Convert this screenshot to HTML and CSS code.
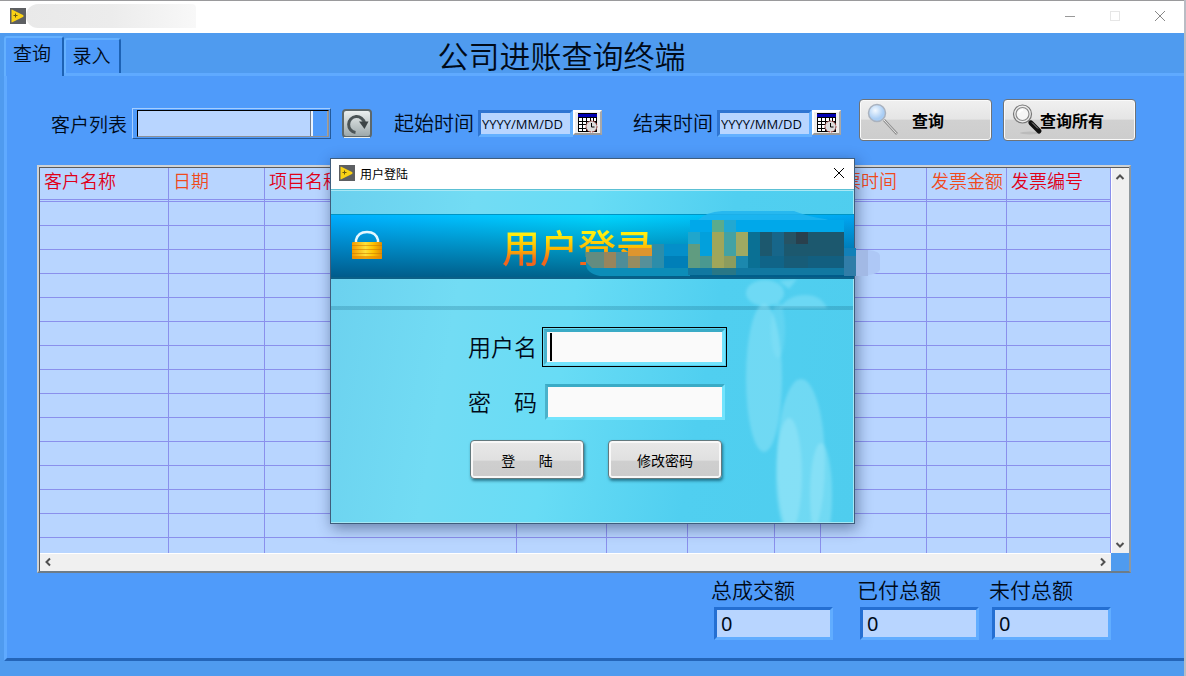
FILE: index.html
```html
<!DOCTYPE html>
<html lang="zh-CN">
<head>
<meta charset="utf-8">
<title>公司进账查询终端</title>
<link rel="stylesheet" href="styles.css">
</head>
<body>
<svg width="0" height="0" class="defs" aria-hidden="true">
  <defs>
    <symbol id="app" viewBox="0 0 16 16"><rect width="16" height="16" fill="#5d5f62"/><path d="M1.500 2Q1.500 1.400 2.300 1.700L13 7Q14.400 8 13 9L2.300 14.300Q1.500 14.600 1.500 14z" fill="#fad214"/><path d="M3.500 7.500h4M5.500 5.500v4" stroke="#6a5a10" stroke-width="1"/></symbol>
    <symbol id="cal" viewBox="0 0 20 20"><rect x="0" y="0" width="19" height="19" fill="#000"/><rect x="0" y="1" width="19" height="3" fill="#0000b4"/><g fill="#fff"><path d="M1 5h3v3H1zM5 5h3v3H5zM9 5h3v3H9zM13 5h2v3h-2zM16 5h2v3h-2zM1 9h3v2H1zM5 9h3v2H5zM9 9h3v2H9zM1 12h3v3H1zM5 12h3v3H5zM1 16h3v2H1zM5 16h3v2H5z"/></g><circle cx="13.500" cy="13.500" r="5.500" fill="#ddd" stroke="#a33a3a" stroke-width="1" stroke-dasharray="2 1"/><path d="M13.500 10v4h3" fill="none" stroke="#000"/></symbol>
    <symbol id="x" viewBox="0 0 12 12"><path d="M1 1l10 10M11 1L1 11" fill="none" stroke="currentColor" stroke-width="1"/></symbol>
    <radialGradient id="lens" cx="40%" cy="35%"><stop offset="0" stop-color="#f3f9ff"/><stop offset="1" stop-color="#a9cdf4"/></radialGradient>
    <linearGradient id="steel" x2="0" y2="1"><stop offset="0" stop-color="#eef2f2"/><stop offset="1" stop-color="#9aa6a8"/></linearGradient>
    <linearGradient id="gold" x2="1" y2="0"><stop offset="0" stop-color="#f29a00"/><stop offset=".45" stop-color="#ffe13a"/><stop offset=".7" stop-color="#ffc400"/><stop offset="1" stop-color="#e08a00"/></linearGradient>
    <filter id="soft" x="-20%" y="-5%" width="140%" height="110%"><feGaussianBlur stdDeviation="1.500"/></filter>
  </defs>
</svg>
<div class="window">
  <header class="titlebar">
    <svg class="appicon"><use href="#app"/></svg>
    <span class="smudge"></span>
    <div class="winbtns">
      <button aria-label="最小化"><svg viewBox="0 0 12 12"><path d="M1 6.500h10" stroke="#999"/></svg></button>
      <button aria-label="最大化" disabled><svg viewBox="0 0 12 12"><rect x="1.500" y="1.500" width="9" height="9" fill="none" stroke="#e6e6e6"/></svg></button>
      <button aria-label="关闭"><svg><use href="#x"/></svg></button>
    </div>
  </header>
  <div class="head">
    <nav class="tabs"><button class="tab active">查询</button><button class="tab">录入</button></nav>
    <h1>公司进账查询终端</h1>
  </div>
  <main class="panel">
    <form class="filters">
      <label for="cust" class="lb19">客户列表</label>
      <span class="combo"><select id="cust"><option></option></select></span>
      <button type="button" class="refresh" aria-label="刷新"><svg viewBox="0 0 30 30"><rect x="1" y="1" width="28" height="27" rx="3" fill="url(#steel)" stroke="#5d686b" stroke-width="2"/><path d="M2 28.500h26" stroke="#e8eeee"/><path d="M13.500 23.500A8 8 0 1 1 22.500 14" fill="none" stroke="#4b5456" stroke-width="3"/><path d="M17 12.500h9.500l-4 7.500z" fill="#3c4446"/></svg></button>
      <label for="from" class="lb20">起始时间</label>
      <span class="date"><input id="from" value="YYYY/MM/DD"><button type="button" aria-label="选择起始时间"><svg><use href="#cal"/></svg></button></span>
      <label for="to" class="lb20 second">结束时间</label>
      <span class="date"><input id="to" value="YYYY/MM/DD"><button type="button" aria-label="选择结束时间"><svg><use href="#cal"/></svg></button></span>
      <button type="button" class="big first"><svg viewBox="0 0 34 34"><path d="M17 17l13 14" stroke="#8f8f8f" stroke-width="2.600"/><path d="M17 17l12.500 13.500" stroke="#ececec" stroke-width="1"/><circle cx="10" cy="10" r="8.500" fill="url(#lens)" stroke="#aab2be" stroke-width="1.500"/></svg><span>查询</span></button>
      <button type="button" class="big all"><svg viewBox="0 0 34 34"><ellipse cx="19" cy="30" rx="10" ry="1.500" fill="#bbb"/><path d="M17 17l4 4" stroke="#777" stroke-width="3"/><path d="M20 20l8 8" stroke="#111" stroke-width="5" stroke-linecap="round"/><path d="M21 19.500l6 6" stroke="#999" stroke-width="1"/><circle cx="11.500" cy="11" r="9" fill="#ededed" stroke="#777" stroke-width="1.200"/><circle cx="11.500" cy="11" r="6.500" fill="#f6f6f6" stroke="#888" stroke-width="1.200"/><path d="M8 10q1-3 4-3" fill="none" stroke="#fff" stroke-width="2"/></svg><span>查询所有</span></button>
    </form>
    <section class="grid">
      <div class="cells">
        <table>
          <colgroup><col class="c1"><col class="c2"><col class="c3"><col class="c4"><col class="c5"><col class="c6"><col class="c7"><col class="c8"><col class="c9"><col></colgroup>
          <thead><tr><th>客户名称</th><th class="o">日期</th><th>项目名称</th><th></th><th></th><th></th><th></th><th class="o">发票时间</th><th class="o">发票金额</th><th>发票编号</th></tr></thead>
          <tbody>
            <tr><td><td><td><td><td><td><td><td><td><td></tr>
            <tr><td><td><td><td><td><td><td><td><td><td></tr>
            <tr><td><td><td><td><td><td><td><td><td><td></tr>
            <tr><td><td><td><td><td><td><td><td><td><td></tr>
            <tr><td><td><td><td><td><td><td><td><td><td></tr>
            <tr><td><td><td><td><td><td><td><td><td><td></tr>
            <tr><td><td><td><td><td><td><td><td><td><td></tr>
            <tr><td><td><td><td><td><td><td><td><td><td></tr>
            <tr><td><td><td><td><td><td><td><td><td><td></tr>
            <tr><td><td><td><td><td><td><td><td><td><td></tr>
            <tr><td><td><td><td><td><td><td><td><td><td></tr>
            <tr><td><td><td><td><td><td><td><td><td><td></tr>
            <tr><td><td><td><td><td><td><td><td><td><td></tr>
            <tr><td><td><td><td><td><td><td><td><td><td></tr>
            <tr><td><td><td><td><td><td><td><td><td><td></tr>
          </tbody>
        </table>
      </div>
      <div class="vbar"><svg viewBox="0 0 10 8"><path d="M1.500 6L5 2.500 8.500 6"/></svg><svg viewBox="0 0 10 8"><path d="M1.500 2L5 5.500 8.500 2"/></svg></div>
      <div class="hbar"><svg viewBox="0 0 8 10"><path d="M6 1.500L2.500 5 6 8.500"/></svg><svg viewBox="0 0 8 10"><path d="M2 1.500L5.500 5 2 8.500"/></svg></div>
      <div class="corner"></div>
    </section>
    <div class="totals">
      <div><label for="t1">总成交额</label><input id="t1" value="0"></div>
      <div class="paid"><label for="t2">已付总额</label><input id="t2" value="0"></div>
      <div><label for="t3">未付总额</label><input id="t3" value="0"></div>
    </div>
  </main>
</div>

<div class="dialog" role="dialog" aria-labelledby="dt">
  <div class="dtitle"><svg class="appicon"><use href="#app"/></svg><span id="dt">用户登陆</span><button aria-label="关闭"><svg><use href="#x"/></svg></button></div>
  <div class="dbody">
    <svg class="shapes" viewBox="0 0 523 333" preserveAspectRatio="xMaxYMin slice" aria-hidden="true">
      <g fill="#a4ebfb" filter="url(#soft)">
        <ellipse cx="434" cy="103" rx="19" ry="13" opacity=".36"/>
        <path d="M448 91l18-2-8 10z" opacity=".36"/>
        <path d="M448 118q10-13 26-13t22 13z" opacity=".34"/>
        <ellipse cx="433" cy="188" rx="18" ry="74" opacity=".38"/>
        <ellipse cx="447" cy="140" rx="7" ry="28" opacity=".2"/>
        <ellipse cx="470" cy="273" rx="24" ry="84" opacity=".38"/>
        <ellipse cx="458" cy="285" rx="13" ry="57" opacity=".4"/>
        <ellipse cx="490" cy="305" rx="11" ry="52" opacity=".4"/>
      </g>
    </svg>
    <div class="banner">
      <svg class="lock" viewBox="0 0 32 32"><path d="M5 13V10Q7 2 16 2t11 8v3" fill="none" stroke="#e4f8ff" stroke-width="2.500"/><rect x="1" y="12" width="30" height="17" rx="1" fill="url(#gold)"/><path d="M1 15.500h30M1 19.500h30M1 23.500h30" stroke="#c97800" stroke-width="1" opacity=".55"/><path d="M1 26h30v3H1z" fill="#e88a00" opacity=".7"/></svg>
      <h2>用户登录</h2>
      <svg class="mosaic" viewBox="580 209 300 70" aria-hidden="true">
        <path d="M698 220q8-8 24-9h72q12 5 31 8l10 3v12H690z" fill="#20b4ee" opacity=".85"/>
        <path d="M690 220h154v12H690z" fill="#00a8ea"/>
        <path d="M586 254h66v-10h38v32H600q-14-3-14-12z" fill="#0c8db8"/>
        <path d="M712 220h12v12h-12z" fill="#5cab8c"/><path d="M724 220h12v12h-12z" fill="#22a8d2"/>
        <path d="M688 232h12v12h-12z" fill="#20a6cc"/><path d="M700 232h12v24h-12z" fill="#02a0dc"/><path d="M712 232h12v36h-12z" fill="#a0a65a"/><path d="M724 232h12v24h-12z" fill="#43a2a4"/><path d="M736 232h12v24h-12z" fill="#a0a962"/>
        <path d="M748 232h96v36h-96z" fill="#1c586e"/><path d="M748 232h12v36h-12z" fill="#0a7094"/><path d="M772 232h12v36h-12z" fill="#17668a"/><path d="M796 232h12v12h-12z" fill="#29404d"/><path d="M784 232h12v12h-12z" fill="#265364"/><path d="M760 256h24v12h-24z" fill="#106488"/><path d="M784 256h24v12h-24z" fill="#175c78"/><path d="M808 256h36v12h-36z" fill="#125f80"/>
        <path d="M586 252h18v16h-12l-6-6z" fill="#638c80"/><path d="M604 252h12v16h-12z" fill="#98855c"/><path d="M616 252h12v16h-12z" fill="#4f8d98"/><path d="M628 248h24v8h-24z" fill="#dd952e"/><path d="M628 256h12v12h-12z" fill="#968c60"/><path d="M640 256h12v12h-12z" fill="#56909a"/><path d="M652 244h12v24h-12z" fill="#2c8daa"/>
        <path d="M664 244h24v12h-24z" fill="#048fc9"/><path d="M664 256h24v12h-24z" fill="#007fb8"/>
        <path d="M688 244h12v24h-12z" fill="#609c80"/><path d="M700 256h12v12h-12z" fill="#4a9890"/><path d="M724 256h12v12h-12z" fill="#8c9c5e"/><path d="M736 256h12v12h-12z" fill="#1c88ae"/>
        <path d="M688 268h156v7H688z" fill="#1178a1"/><path d="M712 268h24v7h-24z" fill="#297786"/>
        <path d="M844 248h12v28h-12z" fill="#307da8"/><path d="M844 248h12v8h-12z" fill="#1280b8"/><path d="M856 250h12v26h-12z" fill="#a2b9e5"/><path d="M868 250q12 1 12 6v14q-2 4-12 5z" fill="#aec8f6"/>
      </svg>
    </div>
    <form class="login">
      <label for="u">用户名</label><span class="focus"><input id="u"></span>
      <label for="p">密　码</label><span class="plain"><input id="p" type="password"></span>
      <div class="actions"><button type="button">登　   陆</button><button type="button">修改密码</button></div>
    </form>
  </div>
</div>
</body>
</html>
```
FILE: styles.css
```css
* { box-sizing: border-box; }
body { margin: 0; font-family: "Noto Sans CJK SC", sans-serif; font-weight: 350; color: #000a18; background: #4f9bef; position: relative; }
button, input, select { font: inherit; color: inherit; padding: 0; border: 0; border-radius: 0; background: none; outline: none; }
svg { display: block; }
.defs { position: absolute; }
.window { min-height: 100vh; border-right: 2px solid #b9bcc4; display: flex; flex-direction: column; overflow: hidden; }
.titlebar { height: 33px; background: #fff; border-top: 1px solid #9a9a9c; display: flex; align-items: center; padding: 0 9px 2px 10px; }
.appicon { width: 16px; height: 16px; flex: none; }
.smudge { width: 170px; height: 24px; border-radius: 12px 4px 0 12px; background: linear-gradient(90deg, #e9e9e9, #ececec 50%, #f8f8f8); }
.winbtns { margin-left: auto; display: flex; gap: 33px; padding-right: 9px; }
.winbtns button { width: 12px; height: 12px; color: #888; }
.winbtns svg { width: 12px; height: 12px; }
.head { height: 40px; display: flex; padding-left: 4px; }
.tabs { display: flex; align-items: flex-end; font-size: 19px; line-height: 24px; }
.tab { background: #4f9bfa; border-top: 2px solid #64b0ff; border-left: 2px solid #64b0ff; border-right: 2px solid #1d62b4; border-radius: 3px 3px 0 0; height: 35px; width: 57px; padding: 0 2px 3px 0; }
.tab.active { height: 40px; width: 60px; margin-bottom: -3px; position: relative; z-index: 1; padding: 0 4px 9px 0; }
h1 { flex: 1; margin: 0; padding-right: 182px; text-align: center; font-size: 31px; line-height: 44px; font-weight: 350; }
.panel { flex: 1; margin: 0 0 15px 4px; background: #4f9bfa; border: 3px solid #5faaff; border-right: 0; border-bottom-color: #2465b8; padding-top: 23px; }
.filters { display: flex; align-items: center; height: 42px; padding-left: 44px; padding-top: 7px; }
.filters > * { flex: none; }
.lb19 { font-size: 19px; line-height: 28px; width: 81px; }
.lb20 { font-size: 20px; line-height: 28px; width: 84px; padding-bottom: 2px; }
.combo { width: 199px; border: 1px solid #a5ceff; border-right-color: #245a9c; border-bottom-color: #245a9c; padding: 1px 1px 1px 4px; }
.combo select { display: block; appearance: none; width: 100%; height: 27px; border: 1px solid #8d9095; border-top-color: #000; border-left-color: #000; background: linear-gradient(90deg, #6f7c90 1px, #eaf4ff 1px 3px, #4f9bfa 3px 17px, #a79f95 17px) right / 18px 100% no-repeat #b8d5ff; }
.refresh { width: 30px; height: 30px; margin: 0 22px 0 11px; }
.refresh svg { width: 30px; height: 30px; }
.date { display: flex; align-items: flex-start; }
.date input { width: 95px; height: 27px; border: 3px solid; border-color: #2f75d2 #63b0ff #63b0ff #2f75d2; background: #b8d5ff; font: 13px/20px "Open Sans", sans-serif; padding-left: 1px; }
.date button { width: 29px; height: 25px; border: 2px solid; border-color: #fff #a8a8a8 #999 #fff; background: #eee; padding-left: 3px; }
.date svg { width: 20px; height: 20px; }
.second { margin-left: 31px; }
.filters .big { align-self: flex-end; position: relative; width: 133px; height: 42px; border: 1px solid #6e7378; border-radius: 4px; background: linear-gradient(#f0f0f0, #e5e5e5 48%, #d1d1d1 50%, #cdcdcd); box-shadow: inset 0 0 0 1px #fafafa; display: flex; align-items: center; font-size: 16px; font-weight: 700; line-height: 24px; color: #000; margin-left: 11px; padding-left: 7px; }
.filters .first { margin-left: 18px; }
.big svg { width: 34px; height: 34px; flex: none; }
.first span { padding-left: 11px; }
.all span { margin-left: -5px; }
.grid { margin: 24px 53px 0 30px; border: 2px solid #cfd2d4; border-right-color: #8f989e; border-bottom-color: #6d7c88; box-shadow: inset 1px 1px 0 #5a5a5a; padding: 1px 0 0 1px; display: grid; grid-template-columns: 1fr 18px; grid-template-rows: 385px 18px; }
.cells { overflow: hidden; background: #b8d5ff; }
table { width: 100%; table-layout: fixed; border-collapse: separate; border-spacing: 0; }
.c1 { width: 129px; } .c2 { width: 96px; } .c3 { width: 252px; } .c4 { width: 90px; } .c5 { width: 81px; } .c6 { width: 87px; } .c7 { width: 46px; } .c8 { width: 106px; } .c9 { width: 80px; }
th, td { border-right: 1px solid #8a90ec; border-bottom: 1px solid #8a90ec; padding: 0 0 0 4px; height: 24px; }
th { height: 34px; border-bottom: 3px double #8a90ec; font-size: 18px; line-height: 24px; font-weight: 350; color: #e00018; text-align: left; white-space: nowrap; vertical-align: top; overflow: hidden; }
.o { color: #f04a1c; }
.vbar, .hbar { background: #f0f0f0; display: flex; justify-content: space-between; align-items: center; }
.vbar { flex-direction: column; padding: 5px 2px 4px 0; border-left: 1px solid #fff; }
.hbar { padding: 0 4px 2px; border-top: 1px solid #fff; }
.grid svg { width: 10px; height: 8px; fill: none; stroke: #505050; stroke-width: 2; }
.grid .hbar svg { width: 8px; height: 10px; }
.corner { background: #4f9bef; }
.totals { display: flex; justify-content: flex-end; padding: 4px 73px 0 0; gap: 10px; }
.totals .paid { margin-left: 14px; }
.totals label { display: block; font-size: 21px; line-height: 24px; }
.totals input { display: block; width: 119px; height: 33px; margin: 6px 0 0 3px; border: 3px solid; border-color: #246fd2 #61adff #61adff #246fd2; background: #b8d5ff; font: 20px/24px "Noto Sans", sans-serif; padding-left: 4px; }

.dialog { position: absolute; top: 158px; left: calc(50% - 263px); width: 525px; border: 1px solid #3f5d7c; background: #fff; box-shadow: 2px 4px 14px rgba(0, 20, 60, .45); }
.dtitle { height: 30px; display: flex; align-items: center; padding: 0 9px 2px 8px; font-size: 12px; font-weight: 400; color: #000; gap: 5px; }
.dtitle button { margin-left: auto; width: 12px; height: 12px; }
.dtitle button svg { width: 12px; height: 12px; }
.dbody { position: relative; height: 334px; padding-top: 24px; background: linear-gradient(rgba(20, 100, 130, .25), rgba(20, 100, 130, .25)) 0 116px / 100% 4px no-repeat, linear-gradient(100deg, #6bd0ee, #72dcf4 25%, #68dcf5 45%, #50cff0 70%, #4fcdee); border-top: 1px solid #5cc0d4; box-shadow: inset 0 1px 0 #a8e8f5, inset -1px -1px 0 #a5e8f5; }
.shapes { position: absolute; inset: 0; width: 100%; height: 100%; }
.banner { position: relative; height: 65px; border-top: 1px solid #0095c4; border-bottom: 2px solid #0b6087; background: linear-gradient(rgba(0, 90, 140, 0), rgba(0, 70, 110, .8)), linear-gradient(90deg, #00aeff, #00d6ff 52%, #00a6f2); display: flex; align-items: center; }
.lock { width: 32px; height: 32px; margin-left: 20px; }
h2 { margin: 0 0 0 119px; font-size: 38px; line-height: 48px; font-weight: 500; color: transparent; background: linear-gradient(#ffee10 25%, #ffb800 55%, #f2661c 80%); background-clip: text; -webkit-background-clip: text; }
.mosaic { position: absolute; left: 249px; top: -6px; width: 300px; height: 70px; }
.login { position: relative; display: grid; grid-template-columns: 74px 185px; row-gap: 16px; align-items: center; margin: 48px 0 0 137px; }
.login label { font-size: 23px; line-height: 34px; white-space: nowrap; padding-bottom: 2px; }
.login span { display: block; border: 1px solid transparent; }
.login .focus { border-color: #000; padding: 1px; }
.login input { display: block; width: 100%; height: 36px; border: 3px solid; border-color: #3aabc6 #72e4fd #72e4fd #4ab2cb; background: #fafafa; }
.login .focus input { background: linear-gradient(#000, #000) 3px 1px / 2px 28px no-repeat #fafafa; }
.login .plain { padding: 0 1px 0 2px; }
.actions { grid-column: 1 / 3; display: flex; gap: 24px; margin: 3px 0 0 2px; }
.actions button { width: 114px; height: 39px; border: 1px solid #63797e; border-radius: 4px; box-shadow: inset 0 0 0 2px #f8f8f8, 1px 2px 3px rgba(0, 60, 80, .6); background: linear-gradient(#e8e8e8, #e0e0e0 52%, #cfcfcf 54%, #cbcbcb); font-size: 14px; font-weight: 400; color: #000; white-space: pre; }
```
